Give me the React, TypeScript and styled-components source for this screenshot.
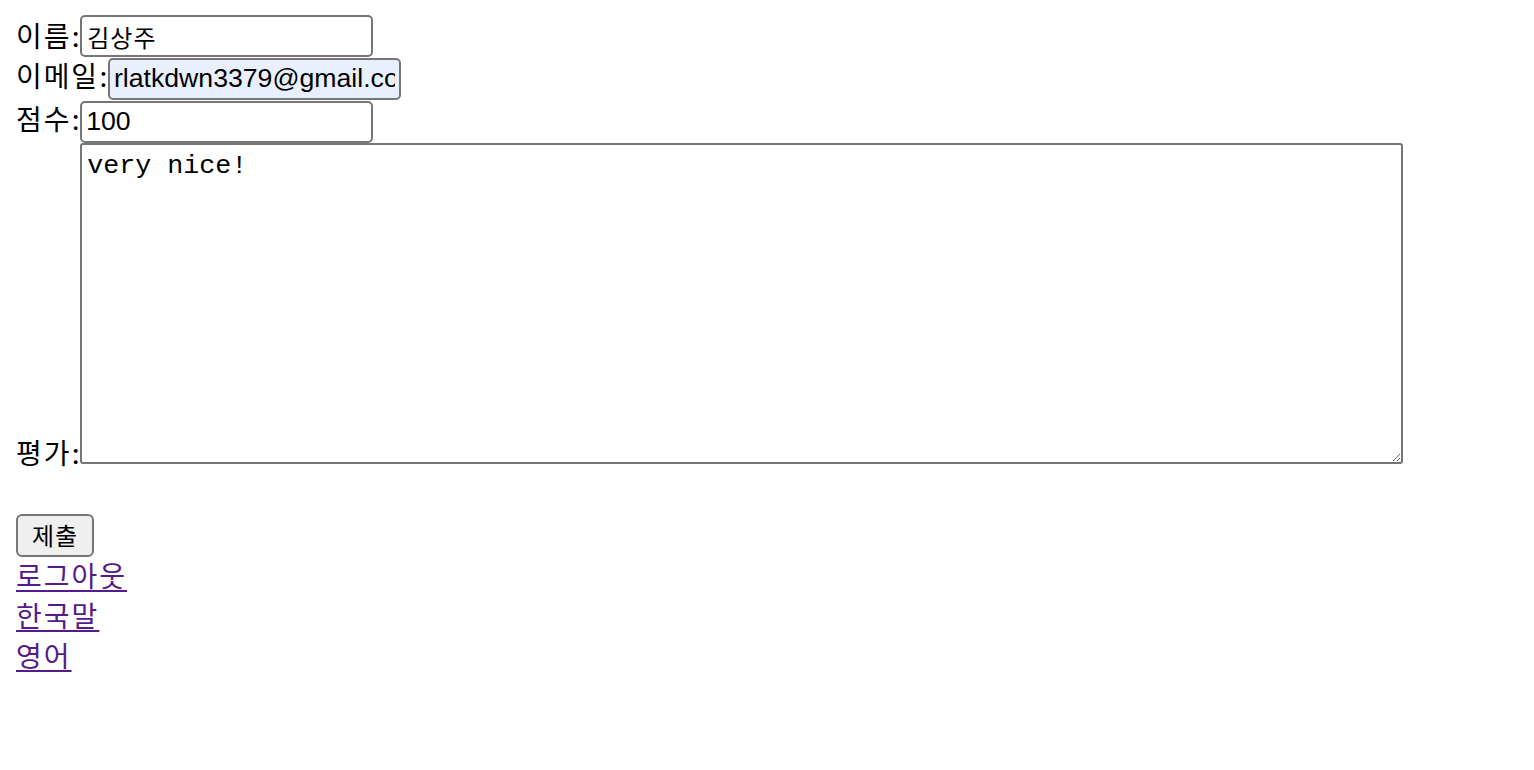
import React from "react";
import styled, { createGlobalStyle } from "styled-components";

const GlobalStyle = createGlobalStyle`
  html, body { margin: 0; padding: 0; background: #ffffff; }
  body { font-family: "Liberation Serif", "Noto Sans CJK KR", serif; color: #000; }
`;

const Page = styled.div`
  padding: 15px 16px 0 16px;
`;

const Form = styled.form`
  display: flex;
  flex-direction: column;
  align-items: flex-start;
`;

const Row = styled.div<{ $h: number }>`
  display: flex;
  align-items: baseline;
  height: ${(p) => p.$h}px;
`;

const AreaRow = styled.div`
  display: flex;
  align-items: flex-end;
`;

const Label = styled.label<{ $drop?: number }>`
  font-family: "Liberation Serif", serif;
  font-size: 32px;
  line-height: 37px;
  white-space: nowrap;
  margin-bottom: ${(p) => (p.$drop ? -p.$drop : 0)}px;
`;

const Ko = styled.span`
  font-family: "Noto Sans CJK KR", sans-serif;
  font-size: 28px;
  letter-spacing: 1.9px;
`;

const TextInput = styled.input<{ $filled?: boolean }>`
  box-sizing: border-box;
  width: 293px;
  height: 42px;
  margin: 0;
  padding: 2px 4px;
  border: 2px solid #767676;
  border-radius: 5px;
  background: ${(p) => (p.$filled ? "#e8f0fe" : "#ffffff")};
  font-family: "Liberation Sans", "Noto Sans CJK KR", sans-serif;
  font-size: 26.67px;
  color: #000;
  outline: none;
`;

const KoInputText = styled(TextInput)`
  font-family: "Noto Sans CJK KR", sans-serif;
  font-size: 24px;
  letter-spacing: 1px;
  padding-left: 5px;
`;

const Area = styled.textarea`
  box-sizing: border-box;
  width: 1323px;
  height: 321px;
  margin: 0;
  padding: 6px 5px 4px 5px;
  border: 2px solid #767676;
  border-radius: 3px;
  font-family: "Liberation Mono", monospace;
  font-size: 26.67px;
  line-height: 1.15;
  color: #000;
  resize: both;
  outline: none;
`;

const Spacer = styled.div`
  height: 50px;
`;

const SubmitButton = styled.button`
  box-sizing: border-box;
  width: 78px;
  height: 43px;
  margin: 0;
  padding: 0 0 2px 0;
  background: #efefef;
  border: 2px solid #767676;
  border-radius: 6px;
  font-family: "Noto Sans CJK KR", sans-serif;
  font-size: 24px;
  letter-spacing: 1px;
  color: #000;
  cursor: pointer;
`;

const Links = styled.nav`
  display: flex;
  flex-direction: column;
  align-items: flex-start;
  margin-top: -2px;
`;

const NavLink = styled.a`
  font-family: "Noto Sans CJK KR", sans-serif;
  font-size: 28px;
  letter-spacing: 2px;
  line-height: 40px;
  color: #551a8b;
  text-decoration: underline;
  text-decoration-thickness: 2px;
  text-underline-offset: 3px;
`;

export default function App() {
  return (
    <>
      <GlobalStyle />
      <Page>
        <Form onSubmit={(e) => e.preventDefault()}>
          <Row $h={42}>
            <Label>
              <Ko>이름</Ko>:
            </Label>
            <KoInputText type="text" defaultValue="김상주" />
          </Row>
          <Row $h={43}>
            <Label>
              <Ko>이메일</Ko>:
            </Label>
            <TextInput type="text" $filled defaultValue="rlatkdwn3379@gmail.com" />
          </Row>
          <Row $h={43}>
            <Label>
              <Ko>점수</Ko>:
            </Label>
            <TextInput type="text" defaultValue="100" />
          </Row>
          <AreaRow>
            <Label $drop={8}>
              <Ko>평가</Ko>:
            </Label>
            <Area defaultValue="very nice!" />
          </AreaRow>
          <Spacer />
          <SubmitButton type="submit">제출</SubmitButton>
        </Form>
        <Links>
          <NavLink href="#">로그아웃</NavLink>
          <NavLink href="#">한국말</NavLink>
          <NavLink href="#">영어</NavLink>
        </Links>
      </Page>
    </>
  );
}
